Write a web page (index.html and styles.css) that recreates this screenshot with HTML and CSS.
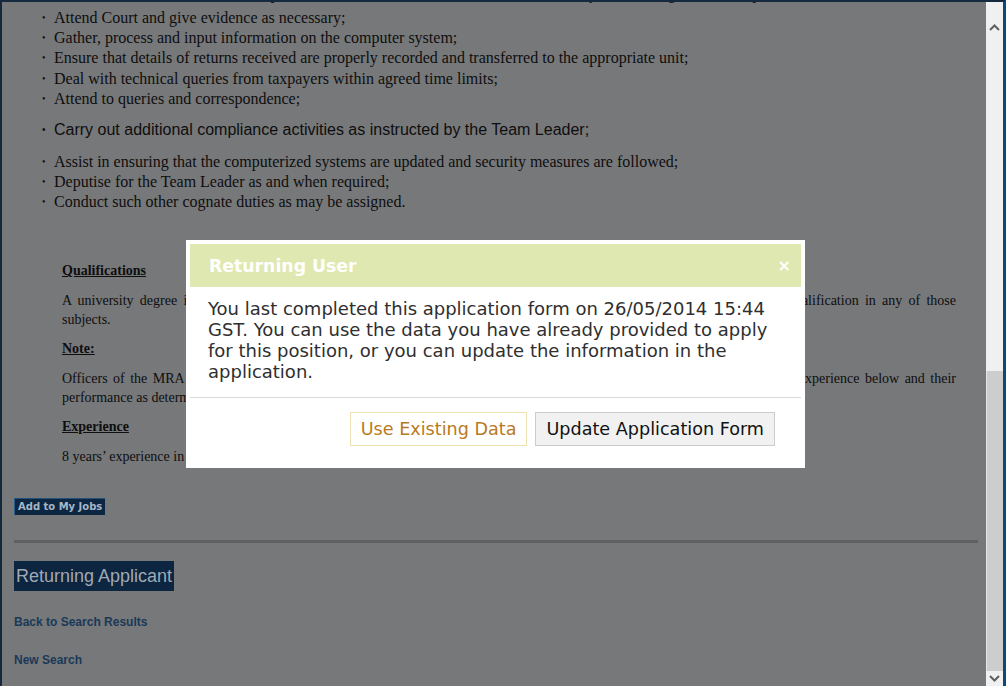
FILE: index.html
```html
<!DOCTYPE html>
<html lang="en">
<head>
<meta charset="utf-8">
<title>Returning User</title>
<link rel="stylesheet" href="styles.css">
</head>
<body>
<div class="frame">
  <div class="viewport">
    <div class="page">
      <ul class="duties">
        <li class="cut"><span class="dot">•</span><span>Liaise with other Sections and Departments to obtain relevant information, and carry out investigations as required;</span></li>
        <li><span class="dot">•</span><span>Attend Court and give evidence as necessary;</span></li>
        <li><span class="dot">•</span><span>Gather, process and input information on the computer system;</span></li>
        <li><span class="dot">•</span><span>Ensure that details of returns received are properly recorded and transferred to the appropriate unit;</span></li>
        <li><span class="dot">•</span><span>Deal with technical queries from taxpayers within agreed time limits;</span></li>
        <li><span class="dot">•</span><span>Attend to queries and correspondence;</span></li>
        <li class="sans"><span class="dot">•</span><span>Carry out additional compliance activities as instructed by the Team Leader;</span></li>
        <li><span class="dot">•</span><span>Assist in ensuring that the computerized systems are updated and security measures are followed;</span></li>
        <li><span class="dot">•</span><span>Deputise for the Team Leader as and when required;</span></li>
        <li><span class="dot">•</span><span>Conduct such other cognate duties as may be assigned.</span></li>
      </ul>

      <div class="requirements">
        <p class="head">Qualifications</p>
        <p class="just"><span class="line">A university degree in Accounting, Finance, Economics, Statistics, Law, Tax or Business Administration or an equivalent qualification in any of those</span>subjects.</p>
        <p class="head">Note:</p>
        <p class="just"><span class="line">Officers of the MRA who have been performing duties in a similar capacity may also apply provided they have the relevant experience below and their</span>performance as determined by the Performance Management System is satisfactory.</p>
        <p class="head">Experience</p>
        <p>8 years’ experience in a tax administration or in a related field.</p>
      </div>

      <div class="actions">
        <span class="jobs-btn">Add to My Jobs</span>
      </div>
      <div class="rule"></div>
      <div class="applicant">Returning Applicant</div>
      <a class="nav-link" href="#">Back to Search Results</a>
      <a class="nav-link" href="#">New Search</a>
    </div>
  </div>
  <div class="scrollbar">
    <div class="arrow up"><svg width="11" height="7" viewBox="0 0 11 7"><path d="M1 6 L5.5 1.5 L10 6" fill="none" stroke="#606060" stroke-width="2"/></svg></div>
    <div class="track"></div>
    <div class="thumb"></div>
    <div class="arrow down"><svg width="11" height="7" viewBox="0 0 11 7"><path d="M1 1 L5.5 5.5 L10 1" fill="none" stroke="#606060" stroke-width="2"/></svg></div>
  </div>
</div>

<div class="modal">
  <div class="modal-head">
    <span class="modal-title">Returning User</span>
    <span class="close">×</span>
  </div>
  <div class="modal-body">You last completed this application form on 26/05/2014 15:44 GST. You can use the data you have already provided to apply for this position, or you can update the information in the application.</div>
  <div class="modal-foot">
    <button class="btn btn-existing">Use Existing Data</button>
    <button class="btn btn-update">Update Application Form</button>
  </div>
</div>
</body>
</html>
```

FILE: styles.css
```css
html, body {
  margin: 0;
  padding: 0;
  width: 1006px;
  height: 686px;
  overflow: hidden;
  background: #77787a;
}

.frame {
  box-sizing: border-box;
  width: 1006px;
  height: 686px;
  display: flex;
  border-top: 2px solid #152a3f;
  border-left: 2px solid #15293c;
  border-right: 3px solid #0d487c;
}

.viewport {
  flex: 1;
  overflow: hidden;
  background: #77787a;
}

.page {
  padding: 0 8px 0 12px;
  color: #0e0e0e;
}

.duties {
  list-style: none;
  margin: -22px 0 0 0;
  padding: 0 0 0 28px;
  font-family: "Liberation Serif", "Times New Roman", serif;
  font-size: 16px;
  line-height: 20.2px;
}

.duties li {
  display: flex;
  white-space: nowrap;
}

.duties li.cut {
  line-height: 28px;
}

.duties .dot {
  width: 12px;
  flex: none;
  font-size: 10px;
}

.duties li.sans {
  font-family: "Liberation Sans", Arial, sans-serif;
  font-size: 16px;
  padding: 11px 0 11.5px 0;
}

.requirements {
  margin: 49px 22px 0 48px;
  font-family: "Liberation Serif", "Times New Roman", serif;
  font-size: 14px;
  line-height: 19px;
}

.requirements p {
  margin: 0 0 10.5px 0;
}

.requirements .head {
  font-weight: bold;
  text-decoration: underline;
}

.requirements .just .line {
  display: block;
  text-align: justify;
  text-align-last: justify;
}

.actions {
  margin-top: 30px;
  height: 17px;
}

.jobs-btn {
  display: inline-block;
  box-sizing: border-box;
  height: 17px;
  padding: 0 3px;
  background: #0d2742;
  border-left: 1px solid #2a5d8a;
  border-top: 1px solid #23507a;
  color: #a7b6c6;
  font-family: "DejaVu Sans", Verdana, sans-serif;
  font-size: 10px;
  font-weight: bold;
  line-height: 15px;
}

.rule {
  margin: 27px 0 0 0;
  height: 3px;
  background: #5f6062;
}

.applicant {
  display: inline-block;
  margin-top: 18px;
  height: 30px;
  padding: 0 2px;
  background: #0c2540;
  color: #a0a9b3;
  font-family: "Liberation Sans", Arial, sans-serif;
  font-size: 18px;
  line-height: 31px;
}

.nav-link {
  display: block;
  color: #1a3858;
  font-family: "Liberation Sans", Arial, sans-serif;
  font-size: 12px;
  font-weight: bold;
  line-height: 14px;
  text-decoration: none;
  margin-top: 24px;
}

.nav-link + .nav-link {
  margin-top: 24px;
}

.scrollbar {
  width: 17px;
  display: flex;
  flex-direction: column;
  background: #f0f0f0;
}

.arrow {
  height: 17px;
  display: flex;
  align-items: center;
  justify-content: center;
  flex: none;
}

.arrow.up {
  height: 50px;
}

.track {
  height: 319px;
  flex: none;
}

.thumb {
  flex: 1;
  background: #cdcdcd;
  border-left: 1px solid #e6e6e6;
}

.arrow.down {
  height: 15px;
}

.modal {
  position: fixed;
  left: 186px;
  top: 240px;
  width: 611px;
  height: 220px;
  padding: 4px;
  background: #ffffff;
  font-family: "DejaVu Sans", Verdana, sans-serif;
}

.modal-head {
  height: 43px;
  background: #dfe8b1;
  display: flex;
  align-items: center;
  justify-content: space-between;
  padding: 0 10px 0 19px;
}

.modal-title {
  color: #ffffff;
  font-size: 17.3px;
  font-weight: bold;
}

.close {
  color: #ffffff;
  font-size: 16px;
  font-weight: bold;
  margin-top: -1px;
}

.modal-body {
  padding: 11px 26px 15px 18px;
  color: #2f2f2f;
  font-size: 18px;
  line-height: 21px;
  border-bottom: 1px solid #dadada;
}

.modal-foot {
  display: flex;
  justify-content: flex-end;
  gap: 8px;
  padding: 14px 26px 0 0;
}

.btn {
  height: 34px;
  padding: 0 10px;
  font-family: "DejaVu Sans", Verdana, sans-serif;
  font-size: 17.6px;
  cursor: pointer;
}

.btn-existing {
  background: #ffffff;
  border: 1px solid #ece2b4;
  color: #b87a1e;
}

.btn-update {
  background: #f1f1f1;
  border: 1px solid #cccccc;
  color: #111111;
}
```
